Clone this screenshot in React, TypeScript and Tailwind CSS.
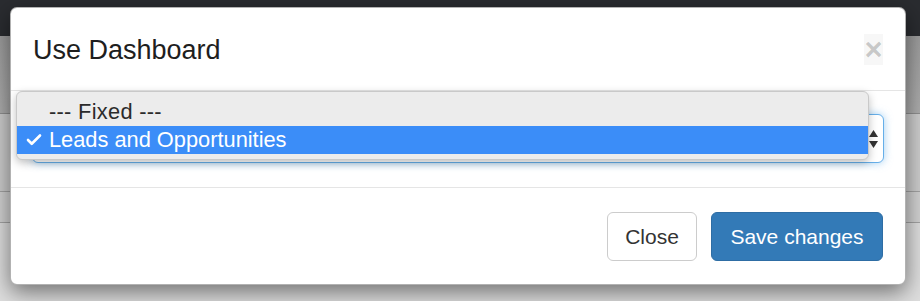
import { Check } from 'lucide-react';

const font = { fontFamily: '"Liberation Sans", Arial, sans-serif' };

function SelectArrows() {
  return (
    <svg width="9" height="18" viewBox="0 0 9 18" className="text-[#333]">
      <path d="M4.5 0L9 7H0z" fill="currentColor" />
      <path d="M0 11h9l-4.5 7z" fill="currentColor" />
    </svg>
  );
}

export default function App() {
  return (
    <div className="relative flex h-[301px] w-[920px] flex-col overflow-hidden bg-[#d9d9d9]" style={font}>
      {/* page behind the backdrop */}
      <div className="h-[36px] shrink-0 bg-[#2a2c30]" />
      <div className="h-[78px] shrink-0 border-b border-[#8f8f8f] bg-gradient-to-b from-[#9c9c9c] to-[#adadad]" />
      <div className="h-[78px] shrink-0 border-b border-[#a3a3a3] bg-[#cdcdcd]" />
      <div className="h-[31px] shrink-0 border-b border-[#a3a3a3] bg-[#d2d2d2]" />
      <div className="flex-1 bg-[#dedede]" />

      {/* modal */}
      <div className="absolute left-[10px] top-[7px] flex h-[278px] w-[896px] flex-col rounded-[7px] border border-black/30 bg-white shadow-[0_7px_22px_rgba(0,0,0,0.5)]">
        <div className="flex h-[83px] shrink-0 items-center justify-between border-b border-[#e5e5e5] pl-[22px] pr-[22px]">
          <h4 className="pt-[2px] text-[27px] leading-[38px] text-[#1e1e1e]">Use Dashboard</h4>
          <button className="flex h-[31px] w-[19px] items-center justify-center bg-[#f7f7f7] text-[31px] font-bold leading-none text-black/20">
            ×
          </button>
        </div>

        <div className="shrink-0 px-[21px] pb-[24px] pt-[23px]">
          <div className="relative flex h-[49px] items-center justify-between rounded-[6px] border border-[#66afe9] bg-white pl-[16px] pr-[5px] text-[21px] text-[#555] shadow-[0_0_9px_rgba(102,175,233,0.6)]">
            <span>Leads and Opportunities</span>
            <SelectArrows />

            {/* native option popup */}
            <div className="absolute left-[-17px] top-[-24px] h-[69px] w-[853px] rounded-[6px] border border-[#c9c9c9] bg-[#ececec] pb-[6px] pt-[6px] text-[21.8px] shadow-[0_3px_8px_rgba(0,0,0,0.25)]">
              <div className="flex h-[28px] items-center pl-[32px] tracking-[0.3px] text-[#2b2b2b]">--- Fixed ---</div>
              <div className="flex h-[28px] items-center bg-[#3b8df8] text-white">
                <span className="flex w-[32px] justify-center pl-[2px]">
                  <Check size={18} strokeWidth={3.5} />
                </span>
                <span>Leads and Opportunities</span>
              </div>
            </div>
          </div>
        </div>

        <div className="flex flex-1 items-start justify-end gap-[14px] border-t border-[#e5e5e5] pr-[22px] pt-[24px]">
          <button className="h-[49px] w-[90px] rounded-[6px] border border-[#cccccc] bg-white text-[21px] text-[#333]">
            Close
          </button>
          <button className="h-[49px] w-[172px] rounded-[6px] border border-[#2e6da4] bg-[#337ab7] text-[21px] text-white">
            Save changes
          </button>
        </div>
      </div>
    </div>
  );
}
